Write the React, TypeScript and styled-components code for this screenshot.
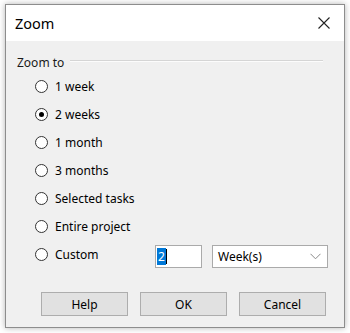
import { useState } from 'react';
import styled, { createGlobalStyle } from 'styled-components';

const GlobalStyle = createGlobalStyle`
  html, body {
    margin: 0;
    padding: 0;
    background: #ffffff;
    font-family: "Noto Sans", "Open Sans", "Liberation Sans", sans-serif;
  }
`;

const Page = styled.div`
  padding: 4px 0 0 5px;
  width: 350px;
  height: 333px;
  box-sizing: border-box;
`;

const Window = styled.div`
  width: 340px;
  height: 324px;
  box-sizing: border-box;
  border: 1px solid #8d8d8d;
  background: #f0f0f0;
  box-shadow: 0 0 6px rgba(0, 0, 0, 0.3);
  display: flex;
  flex-direction: column;
`;

const TitleBar = styled.div`
  height: 36px;
  background: #ffffff;
  display: flex;
  align-items: center;
  justify-content: space-between;
  padding: 0 14px 0 9px;
`;

const Title = styled.span`
  font-size: 14.5px;
  color: #000;
`;

const CloseIcon = styled.svg`
  width: 12px;
  height: 12px;
`;

const Body = styled.div`
  flex: 1;
  padding: 13px 11px 0 11px;
  display: flex;
  flex-direction: column;
`;

const GroupHeader = styled.div`
  display: flex;
  align-items: center;
  gap: 6px;
  height: 16px;
  font-size: 12px;
  color: #1a1a1a;
  padding-right: 10px;
`;

const GroupLine = styled.div`
  flex: 1;
  height: 1px;
  background: #d5d5d5;
  border-bottom: 1px solid #fcfcfc;
  margin-top: -3px;
`;

const RadioList = styled.div`
  margin-top: 2px;
  padding-left: 18px;
  display: flex;
  flex-direction: column;
`;

const Row = styled.div`
  height: 28px;
  display: grid;
  grid-template-columns: 120px 47px 116px;
  column-gap: 9px;
  margin-left: 0;
  align-items: center;

  & > :first-child {
    margin-right: -9px;
  }
`;

const RadioLabel = styled.label`
  display: flex;
  align-items: center;
  gap: 7px;
  font-size: 12px;
  color: #000;
  cursor: default;
`;

const Circle = styled.span<{ $checked: boolean }>`
  width: 13px;
  height: 13px;
  box-sizing: border-box;
  border-radius: 50%;
  border: 1px solid #333;
  background: #fff;
  display: flex;
  align-items: center;
  justify-content: center;

  &::after {
    content: '';
    width: 5px;
    height: 5px;
    border-radius: 50%;
    background: ${(p) => (p.$checked ? '#000' : 'transparent')};
  }
`;

const Fields = styled.div`
  grid-column: 2 / 4;
  align-self: end;
  margin-left: -9px;
  display: flex;
  gap: 10px;
`;

const NumberBox = styled.div`
  width: 47px;
  height: 23px;
  box-sizing: border-box;
  background: #fff;
  border: 1px solid #aaaaaa;
  display: flex;
  align-items: center;
  padding-left: 1px;
  font-size: 12px;
`;

const Selected = styled.span`
  background: #0078d7;
  color: #fff;
  padding: 0 1px;
  line-height: 17px;
`;

const Caret = styled.span`
  width: 1px;
  height: 15px;
  background: #000;
`;

const SelectBox = styled.div`
  width: 116px;
  height: 23px;
  box-sizing: border-box;
  background: #fff;
  border: 1px solid #aaaaaa;
  display: flex;
  align-items: center;
  justify-content: space-between;
  padding: 0 6px 0 5px;
  font-size: 12px;
  color: #000;
`;

const Chevron = styled.svg`
  width: 11px;
  height: 7px;
`;

const ButtonRow = styled.div`
  margin-top: 24px;
  padding: 0 7px 0 24px;
  display: flex;
  gap: 12px;
`;

const Button = styled.button`
  width: 87px;
  height: 24px;
  box-sizing: border-box;
  background: #e1e1e1;
  border: 1px solid #adadad;
  font-family: inherit;
  font-size: 12px;
  color: #000;
  padding: 0;
`;

const options = ['1 week', '2 weeks', '1 month', '3 months', 'Selected tasks', 'Entire project', 'Custom'];

export default function App() {
  const [choice, setChoice] = useState('2 weeks');

  return (
    <>
      <GlobalStyle />
      <Page>
        <Window>
          <TitleBar>
            <Title>Zoom</Title>
            <CloseIcon viewBox="0 0 12 12">
              <path d="M0.5 0.5 L11.5 11.5 M11.5 0.5 L0.5 11.5" stroke="#222" strokeWidth="1.1" fill="none" />
            </CloseIcon>
          </TitleBar>
          <Body>
            <GroupHeader>
              Zoom to
              <GroupLine />
            </GroupHeader>
            <RadioList>
              {options.map((opt) => (
                <Row key={opt}>
                  <RadioLabel onClick={() => setChoice(opt)}>
                    <Circle $checked={choice === opt} />
                    {opt}
                  </RadioLabel>
                  {opt === 'Custom' && (
                    <Fields>
                      <NumberBox>
                        <Selected>2</Selected>
                        <Caret />
                      </NumberBox>
                      <SelectBox>
                        Week(s)
                        <Chevron viewBox="0 0 11 7">
                          <path d="M0.5 0.8 L5.5 5.8 L10.5 0.8" stroke="#8a8a8a" strokeWidth="1" fill="none" />
                        </Chevron>
                      </SelectBox>
                    </Fields>
                  )}
                </Row>
              ))}
            </RadioList>
            <ButtonRow>
              <Button>Help</Button>
              <Button>OK</Button>
              <Button>Cancel</Button>
            </ButtonRow>
          </Body>
        </Window>
      </Page>
    </>
  );
}
